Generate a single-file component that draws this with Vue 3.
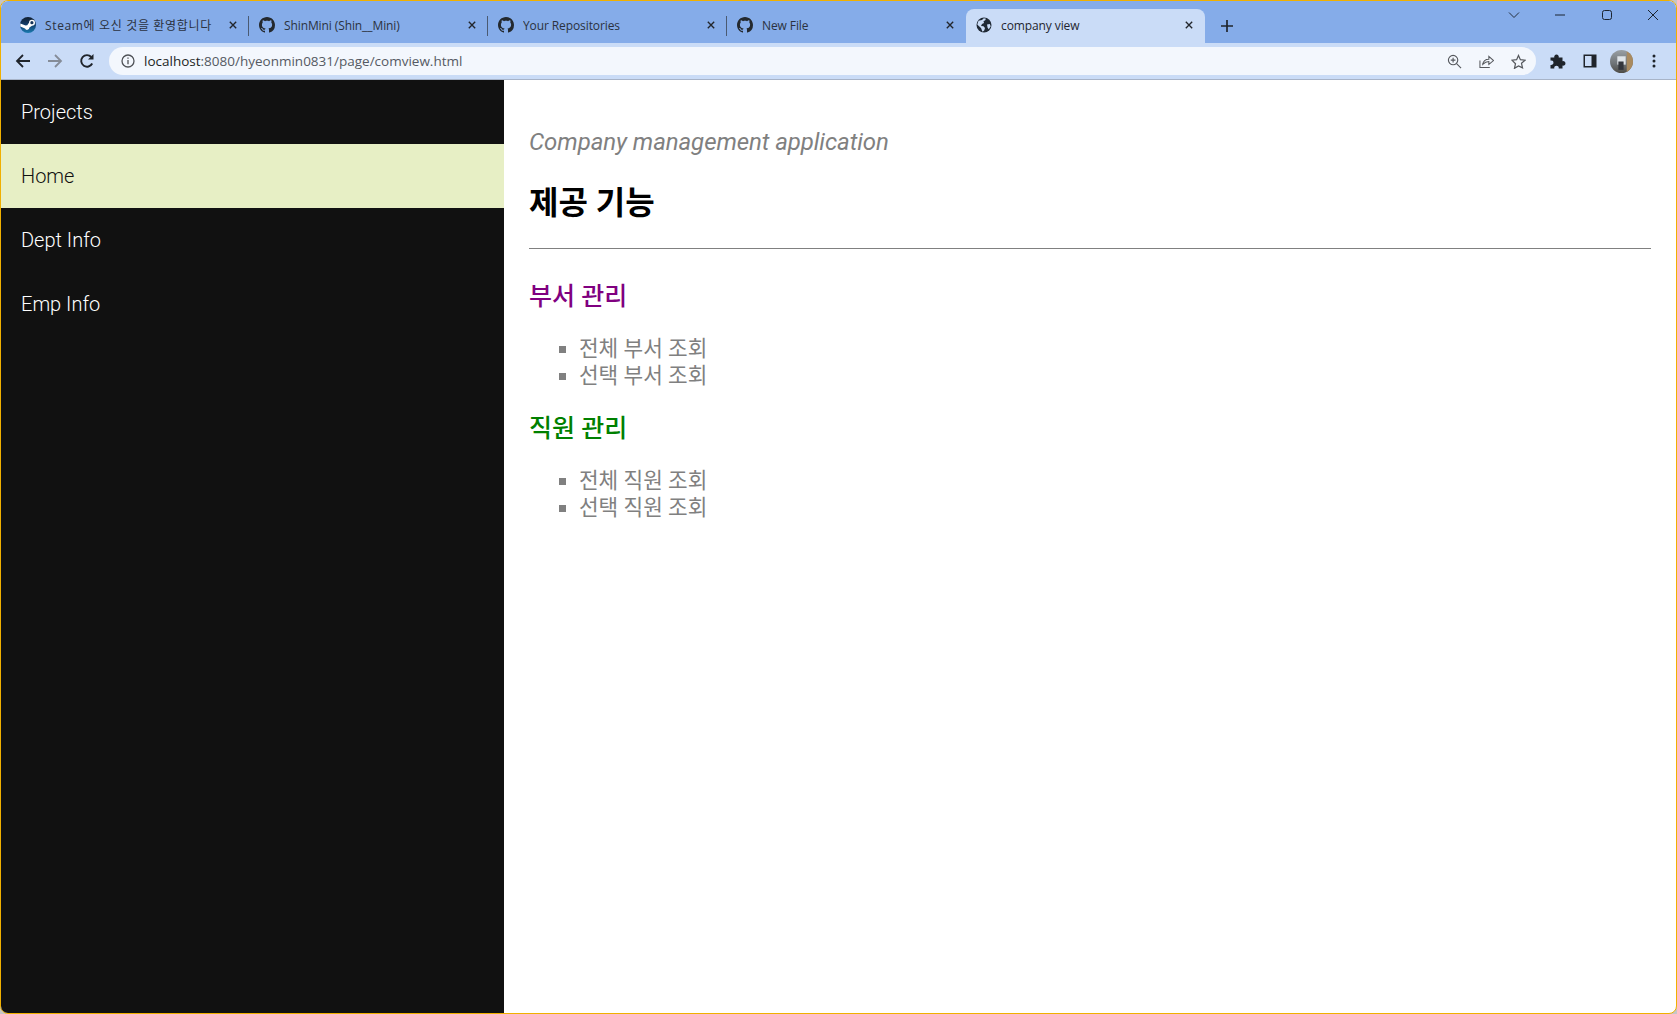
<template>
  <div class="window">
    <!-- 탭 영역 -->
    <div class="tabstrip">
      <div class="tabs">
        <div v-for="(tab, index) in tabs" :key="index" class="tab" :class="{ active: tab.active, nosep: tab.active || tabs[index + 1]?.active }">
          <svg v-if="tab.icon === 'steam'" class="favicon" viewBox="0 0 16 16">
            <defs>
              <linearGradient id="steamfill" x1="0" y1="0" x2="0" y2="1">
                <stop offset="0" stop-color="#111d2e" />
                <stop offset="0.5" stop-color="#14406e" />
                <stop offset="1" stop-color="#1a7bb0" />
              </linearGradient>
            </defs>
            <circle cx="8" cy="8" r="8" fill="url(#steamfill)" />
            <path d="M0.3 9.6L5 11.5a2.3 2.3 0 0 0 4.4-.9l2.6-1.9a3 3 0 1 0-3-3L7 8.400a2.300 2.300 0 0 0-1.400.2L0.300 6.500z" fill="#fff" />
            <circle cx="11.900" cy="5.700" r="1.600" fill="#16345a" />
          </svg>
          <svg v-else-if="tab.icon === 'github'" class="favicon" viewBox="0 0 16 16">
            <path fill="#24292f" d="M8 0C3.58 0 0 3.58 0 8c0 3.54 2.290 6.530 5.470 7.590.400.070.550-.170.550-.380 0-.190-.010-.820-.010-1.490-2.010.370-2.530-.490-2.690-.940-.090-.230-.480-.940-.820-1.130-.280-.150-.680-.520-.010-.530.630-.010 1.080.580 1.230.820.720 1.210 1.870.870 2.330.660.070-.520.280-.870.510-1.070-1.780-.200-3.640-.890-3.640-3.950 0-.870.310-1.590.820-2.150-.080-.200-.360-1.020.080-2.120 0 0 .670-.210 2.200.820.640-.180 1.320-.270 2-.270.680 0 1.360.090 2 .270 1.530-1.040 2.200-.820 2.200-.820.440 1.100.160 1.920.080 2.120.510.560.820 1.270.820 2.150 0 3.070-1.870 3.750-3.650 3.950.290.250.540.730.540 1.480 0 1.070-.010 1.930-.010 2.200 0 .210.150.460.550.380A8.013 8.013 0 0 0 16 8c0-4.420-3.580-8-8-8z" />
          </svg>
          <svg v-else class="favicon" viewBox="0 0 16 16">
            <circle cx="8" cy="8" r="7.500" fill="#202a36" />
            <path fill="#cadcf7" d="M2.500 3.800L6 3l1.800-1.800 2.200.5-1 1.800-1.500.6L8 6l-2 1-1 2 2.500.3L9 11l-.8 2.600-1.700 1.200L5 11 2.800 9 1.300 7.500zM11 7.500l2.800-.6.900 2.300-1.900 3-1.200-1.500z" />
          </svg>
          <span class="tab-title" :class="{ hangul: tab.hangul }">{{ tab.title }}</span>
          <svg class="tab-close" viewBox="0 0 10 10">
            <path d="M1 1l8 8M9 1l-8 8" stroke="#22262c" stroke-width="1.700" fill="none" />
          </svg>
        </div>
      </div>
      <svg class="newtab" viewBox="0 0 12 12">
        <path d="M6 0v12M0 6h12" stroke="#1f242b" stroke-width="1.700" fill="none" />
      </svg>
      <div class="winctrl">
        <svg class="ctrl" viewBox="0 0 12 12"><path d="M1 3.500l5 5 5-5" stroke="#25303e" fill="none" /></svg>
        <svg class="ctrl" viewBox="0 0 12 12"><path d="M1 6h10" stroke="#1b2430" fill="none" /></svg>
        <svg class="ctrl" viewBox="0 0 12 12"><rect x="1.500" y="1.500" width="9" height="9" rx="2" stroke="#1b2430" fill="none" /></svg>
        <svg class="ctrl" viewBox="0 0 12 12"><path d="M1 1l10 10M11 1L1 11" stroke="#1b2430" fill="none" /></svg>
      </div>
    </div>

    <!-- 주소창 영역 -->
    <div class="toolbar">
      <div class="nav">
        <svg class="tool" viewBox="0 0 16 16"><path d="M15 8H2M8 2L2 8l6 6" stroke="#1f242b" stroke-width="1.800" fill="none" /></svg>
        <svg class="tool" viewBox="0 0 16 16"><path d="M1 8h13M8 2l6 6-6 6" stroke="#858c98" stroke-width="1.800" fill="none" /></svg>
        <svg class="tool" viewBox="0 0 16 16"><path d="M13.200 10.500A5.800 5.800 0 1 1 12.300 4" stroke="#1f242b" stroke-width="1.900" fill="none" /><path d="M14.500 1v5.500H9z" fill="#1f242b" /></svg>
      </div>
      <div class="omnibox">
        <svg class="info" viewBox="0 0 14 14">
          <circle cx="7" cy="7" r="6" stroke="#4f5257" stroke-width="1.300" fill="none" />
          <path d="M7 6v4.200M7 3.500v1.300" stroke="#4f5257" stroke-width="1.300" />
        </svg>
        <span class="url"><b>localhost</b>:8080/hyeonmin0831/page/comview.html</span>
        <div class="omni-icons">
          <svg class="omni" viewBox="0 0 16 16">
            <circle cx="6.500" cy="6.500" r="5" stroke="#55585d" stroke-width="1.200" fill="none" />
            <path d="M10.200 10.200L15 15M6.500 4v5M4 6.500h5" stroke="#55585d" stroke-width="1.200" fill="none" />
          </svg>
          <svg class="omni" viewBox="0 0 16 16">
            <path d="M1 7v7.500h10.500" stroke="#55585d" stroke-width="1.100" fill="none" />
            <path d="M4 11c.5-3.500 3-5.500 6.500-5.500V2.500l5 4.500-5 4V8C8 8 6 9 4 11z" stroke="#55585d" stroke-width="1.100" fill="none" />
          </svg>
          <svg class="omni" viewBox="0 0 16 16">
            <path d="M8 1.500l2 4.600 5 .5-3.800 3.300 1.100 4.900L8 12.700l-4.300 2.600 1.100-4.900L1 6.600l5-.5z" stroke="#55585d" stroke-width="1.300" fill="none" />
          </svg>
        </div>
      </div>
      <div class="actions">
        <svg class="tool" viewBox="0 0 16 16"><path fill="#1f242b" d="M0.500 4.500h3.800a2.300 2.300 0 1 1 4.400 0H12.500v3.700a2.300 2.300 0 1 1 0 4.400v3H8.700a2.300 2.300 0 1 0-4.400 0H0.500v-3.700a2.300 2.300 0 1 0 0-4.400z" /></svg>
        <svg class="tool" viewBox="0 0 16 16"><path fill-rule="evenodd" fill="#1f242b" d="M1.500 1.500h13v13h-13zM3 3v10h6.500V3z" /></svg>
        <svg class="avatar" viewBox="0 0 22 22">
          <defs>
            <clipPath id="avclip"><circle cx="11" cy="11" r="11" /></clipPath>
            <linearGradient id="avtop" x1="0" y1="0" x2="0" y2="1">
              <stop offset="0" stop-color="#9aa0a4" />
              <stop offset="0.6" stop-color="#6d7276" />
              <stop offset="1" stop-color="#4e4c46" />
            </linearGradient>
          </defs>
          <g clip-path="url(#avclip)">
            <rect width="22" height="22" fill="url(#avtop)" />
            <rect x="16" width="6" height="22" fill="#a98a5f" />
            <rect x="7" y="6" width="8" height="8" fill="#dfe4e8" />
            <rect x="8" y="11" width="5" height="8" fill="#33363c" />
          </g>
        </svg>
        <svg class="tool" viewBox="0 0 16 16"><circle cx="8" cy="3" r="1.500" fill="#1f242b" /><circle cx="8" cy="8" r="1.500" fill="#1f242b" /><circle cx="8" cy="13" r="1.500" fill="#1f242b" /></svg>
      </div>
    </div>

    <!-- 페이지 영역 -->
    <div class="page">
      <nav class="sidebar">
        <a v-for="menu in menus" :key="menu" class="menu" :class="{ current: menu === 'Home' }">{{ menu }}</a>
      </nav>
      <main class="content">
        <p class="subtitle">Company management application</p>
        <h1>제공 기능</h1>
        <hr>
        <h2 class="dept">부서 관리</h2>
        <ul>
          <li>전체 부서 조회</li>
          <li>선택 부서 조회</li>
        </ul>
        <h2 class="emp">직원 관리</h2>
        <ul>
          <li>전체 직원 조회</li>
          <li>선택 직원 조회</li>
        </ul>
      </main>
    </div>
  </div>
</template>

<script setup>
const tabs = [
  { title: 'Steam에 오신 것을 환영합니다', icon: 'steam', hangul: true },
  { title: 'ShinMini (Shin__Mini)', icon: 'github' },
  { title: 'Your Repositories', icon: 'github' },
  { title: 'New File', icon: 'github' },
  { title: 'company view', icon: 'globe', active: true },
];
const menus = ['Projects', 'Home', 'Dept Info', 'Emp Info'];
</script>

<style>
html, body {
  margin: 0;
  background: #c6c6c6;
}
</style>

<style scoped>
.window {
  width: 1677px;
  height: 1014px;
  box-sizing: border-box;
  border: 1px solid #f0b000;
  border-radius: 8px;
  background: #fff;
  display: flex;
  flex-direction: column;
  overflow: hidden;
  font-family: "Roboto", "Noto Sans CJK KR", sans-serif;
}

.tabstrip {
  height: 42px;
  flex: none;
  background: #85ace9;
  display: flex;
  align-items: flex-end;
  padding-left: 9px;
  position: relative;
}
.tabs {
  display: flex;
}
.tab {
  width: 239px;
  height: 34px;
  box-sizing: border-box;
  display: flex;
  align-items: center;
  padding: 0 11px 2px 10px;
  position: relative;
  color: #2b3240;
  font-family: "Open Sans", "Noto Sans CJK KR", sans-serif;
  font-size: 12px;
}
.tab::after {
  content: "";
  position: absolute;
  right: 0;
  top: 7px;
  width: 1px;
  height: 20px;
  background: #4a5a72;
}
.tab.nosep::after {
  display: none;
}
.tab.active {
  background: #cadcf7;
  border-radius: 8px 8px 0 0;
  color: #1f2530;
}
.favicon {
  width: 16px;
  height: 16px;
  flex: none;
  margin-right: 9px;
}
.tab-title {
  flex: 1;
  white-space: nowrap;
  overflow: hidden;
  letter-spacing: -0.1px;
}
.tab-title.hangul {
  letter-spacing: 0.65px;
}
.tab-close {
  width: 8px;
  height: 8px;
  flex: none;
  margin-right: 1px;
}
.newtab {
  width: 12px;
  height: 12px;
  margin: 0 0 11px 16px;
}
.winctrl {
  margin-left: auto;
  align-self: flex-start;
  display: flex;
  gap: 34.500px;
  padding: 8px 17px 0 0;
}
.ctrl {
  width: 12px;
  height: 12px;
}

.toolbar {
  height: 37px;
  flex: none;
  box-sizing: border-box;
  background: #cadcf7;
  border-bottom: 1px solid #a8b4c8;
  display: flex;
  align-items: center;
}
.nav {
  display: flex;
  gap: 16px;
  padding-left: 14px;
  width: 94px;
  box-sizing: border-box;
}
.tool {
  width: 16px;
  height: 16px;
  flex: none;
}
.omnibox {
  width: 1427px;
  height: 28px;
  margin-left: 14px;
  background: #f3f7fd;
  border-radius: 14px;
  display: flex;
  align-items: center;
  padding: 0 10px 0 12px;
  box-sizing: border-box;
}
.info {
  width: 14px;
  height: 14px;
  flex: none;
}
.url {
  margin-left: 9px;
  font-family: "Open Sans", sans-serif;
  font-size: 13.500px;
  color: #555a63;
  white-space: nowrap;
}
.url b {
  font-weight: 400;
  color: #1c1f24;
}
.omni-icons {
  margin-left: auto;
  display: flex;
  gap: 17px;
}
.omni {
  width: 15px;
  height: 15px;
}
.actions {
  display: flex;
  align-items: center;
  gap: 16px;
  padding-left: 14px;
}
.avatar {
  width: 23px;
  height: 23px;
  margin: 0 -3px 0 -4px;
}

.page {
  flex: 1;
  display: flex;
  min-height: 0;
}
.sidebar {
  width: 503px;
  flex: none;
  background: #111;
  display: flex;
  flex-direction: column;
}
.menu {
  height: 64px;
  padding-left: 20px;
  display: flex;
  align-items: center;
  color: #fff;
  font-size: 20px;
  font-weight: 350;
}
.menu.current {
  background: #e7efc5;
  color: #111;
}
.content {
  flex: 1;
  padding: 44px 25px 0;
  color: #808080;
}
.subtitle {
  margin: 0;
  font-style: italic;
  font-size: 24px;
  font-weight: 400;
  letter-spacing: -0.07px;
  line-height: 36px;
}
h1 {
  margin: 23px 0 0;
  font-size: 32px;
  line-height: 40px;
  font-weight: 700;
  color: #000;
}
hr {
  margin: 25px 0 0;
  border: none;
  border-top: 1px solid #808080;
}
h2 {
  margin: 31px 0 0;
  font-size: 25px;
  line-height: 34px;
  font-weight: 500;
}
.dept {
  color: #800080;
}
.emp {
  margin-top: 23px;
  color: #008000;
}
ul {
  margin: 21px 0 0;
  padding-left: 50px;
  list-style: square;
  font-size: 21.330px;
  line-height: 27px;
}
</style>
